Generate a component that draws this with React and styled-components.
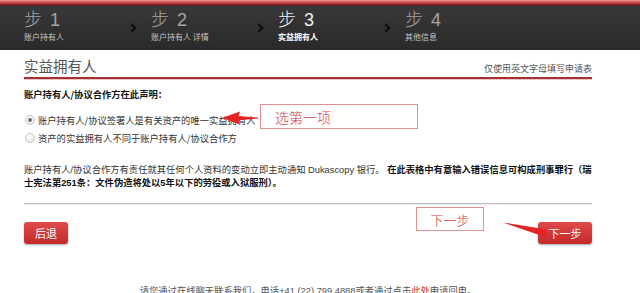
import React from 'react';
import styled, { createGlobalStyle } from 'styled-components';

const Global = createGlobalStyle`
  html, body { margin: 0; padding: 0; background: #fff; }
  body {
    font-family: "Liberation Sans", "Noto Sans CJK SC", sans-serif;
    color: #333;
    width: 640px;
    height: 293px;
    overflow: hidden;
  }
`;

const Page = styled.div`
  position: relative;
  width: 640px;
  height: 293px;
  overflow: hidden;
`;

const Stripe = styled.div`
  height: 6px;
  background: linear-gradient(to bottom, #eaa0a0 0, #d45a5a 2px, #b53434 3.5px, #7a1e1e 5px, #3a2626 6px);
`;

const StepsBar = styled.div`
  height: 44px;
  display: flex;
  align-items: flex-start;
  padding-left: 24px;
  background: linear-gradient(to bottom, #383838, #2a2a2a);
`;

const Step = styled.div`
  width: ${p => (p.$last ? 'auto' : '106px')};
  display: flex;
  flex-direction: column;
  padding-top: 3px;
`;

const StepNum = styled.div`
  font-size: 18px;
  line-height: 22px;
  font-weight: 300;
  color: ${p => (p.$active ? '#f2f2f2' : '#a4a4a4')};
  font-family: "Liberation Sans", "Noto Sans CJK SC", sans-serif;
  span { margin-left: 8px; }
`;

const StepSub = styled.div`
  font-size: 8px;
  line-height: 12px;
  color: ${p => (p.$active ? '#ffffff' : '#c4c4c4')};
  font-weight: ${p => (p.$active ? 700 : 400)};
  font-family: "Noto Sans CJK SC", sans-serif;
`;

const Chevron = styled.div`
  width: 21px;
  padding-top: 17px;
  display: flex;
`;

const Content = styled.div`
  padding: 0 48px 0 24px;
`;

const TitleRow = styled.div`
  display: flex;
  justify-content: space-between;
  align-items: flex-end;
  padding-top: 7px;
  padding-bottom: 2px;
  border-bottom: 2px solid #a83030;
  box-shadow: 0 1px 0 #e8c4c4;
`;

const Title = styled.h1`
  margin: 0;
  font-size: 14.5px;
  line-height: 18px;
  font-weight: 400;
  color: #555;
  font-family: "Noto Sans CJK SC", serif;
`;

const Note = styled.div`
  font-size: 9px;
  line-height: 12px;
  color: #555;
  font-family: "Noto Sans CJK SC", sans-serif;
`;

const Heading = styled.div`
  margin-top: 9px;
  font-size: 9.3px;
  line-height: 12px;
  font-weight: 700;
  color: #111;
  font-family: "Noto Sans CJK SC", sans-serif;
`;

const Options = styled.div`
  margin-top: 11px;
  display: flex;
  flex-direction: column;
`;

const Option = styled.label`
  height: 18px;
  display: flex;
  align-items: center;
  gap: 3px;
  padding-left: 1px;
  font-size: 9.3px;
  color: #333;
  font-family: "Noto Sans CJK SC", sans-serif;
`;

const Radio = styled.span`
  width: 8px;
  height: 8px;
  border-radius: 50%;
  border: 1px solid #c4c4c4;
  background: radial-gradient(circle at 40% 35%, #fff, #e4e4e4);
  display: flex;
  align-items: center;
  justify-content: center;
  &::after {
    content: '';
    width: 4px;
    height: 4px;
    border-radius: 50%;
    background: ${p => (p.$checked ? '#707070' : 'transparent')};
  }
`;

const Para = styled.p`
  margin: 17px 0 0;
  font-size: 9.3px;
  line-height: 13px;
  color: #333;
  font-family: "Liberation Sans", "Noto Sans CJK SC", sans-serif;
  b { color: #111; font-weight: 700; }
`;

const Divider = styled.div`
  margin-top: 13px;
  border-top: 1px solid #bdbdbd;
  border-bottom: 1px solid #ececec;
`;

const ButtonRow = styled.div`
  margin-top: 17px;
  display: flex;
  justify-content: space-between;
`;

const Button = styled.button`
  width: ${p => p.$w}px;
  height: 22px;
  border: none;
  border-radius: 3px;
  background: linear-gradient(to bottom, #e04a4a, #c22a2a);
  box-shadow: 0 1px 2px rgba(0, 0, 0, 0.35);
  color: #fff;
  font-size: 11px;
  font-family: "Noto Sans CJK SC", sans-serif;
  padding: 0;
  display: flex;
  align-items: center;
  justify-content: center;
`;

const Footer = styled.div`
  margin-top: 41px;
  text-align: center;
  font-size: 9.3px;
  line-height: 12px;
  color: #555;
  font-family: "Liberation Sans", "Noto Sans CJK SC", sans-serif;
  a { color: #cc3333; text-decoration: none; }
`;

const AnnoBox = styled.div`
  position: absolute;
  left: ${p => p.$x}px;
  top: ${p => p.$y}px;
  width: ${p => p.$w}px;
  height: ${p => p.$h}px;
  box-sizing: border-box;
  border: 1px solid #e39090;
  background: #fff;
  display: flex;
  align-items: center;
  justify-content: ${p => (p.$center ? 'center' : 'flex-start')};
  padding-left: ${p => (p.$center ? 0 : 14)}px;
  color: #d43c3c;
  font-size: ${p => p.$fs}px;
  font-weight: 300;
  font-family: "Noto Sans CJK SC", sans-serif;
`;

const Overlay = styled.svg`
  position: absolute;
  left: 0;
  top: 0;
  pointer-events: none;
`;

const steps = [
  { n: 1, sub: '账户持有人' },
  { n: 2, sub: '账户持有人 详情' },
  { n: 3, sub: '实益拥有人', active: true },
  { n: 4, sub: '其他信息' },
];

export default function App() {
  return (
    <Page>
      <Global />
      <Stripe />
      <StepsBar>
        {steps.map((s, i) => (
          <React.Fragment key={s.n}>
            <Step $last={i === steps.length - 1}>
              <StepNum $active={s.active}>步<span>{s.n}</span></StepNum>
              <StepSub $active={s.active}>{s.sub}</StepSub>
            </Step>
            {i < steps.length - 1 && (
              <Chevron>
                <svg width="7" height="10" viewBox="0 0 7 10">
                  <polyline points="1.3,1.3 5.3,5 1.3,8.7" fill="none" stroke="#0d0d0d" strokeWidth="2.2" />
                </svg>
              </Chevron>
            )}
          </React.Fragment>
        ))}
      </StepsBar>
      <Content>
        <TitleRow>
          <Title>实益拥有人</Title>
          <Note>仅使用英文字母填写申请表</Note>
        </TitleRow>
        <Heading>账户持有人/协议合作方在此声明：</Heading>
        <Options>
          <Option><Radio $checked />账户持有人/协议签署人是有关资产的唯一实益拥有人</Option>
          <Option><Radio />资产的实益拥有人不同于账户持有人/协议合作方</Option>
        </Options>
        <Para>
          账户持有人/协议合作方有责任就其任何个人资料的变动立即主动通知 Dukascopy 银行。 <b>在此表格中有意输入错误信息可构成刑事罪行（瑞</b>
          <br />
          <b>士宪法第251条：文件伪造将处以5年以下的劳役或入狱服刑）。</b>
        </Para>
        <Divider />
        <ButtonRow>
          <Button $w={44}>后退</Button>
          <Button $w={54}>下一步</Button>
        </ButtonRow>
        <Footer>
          请您通过在线聊天联系我们，电话+41 (22) 799 4888或者通过点击<a href="#">此处</a>申请回电。
        </Footer>
      </Content>

      <AnnoBox $x={260} $y={104} $w={158} $h={25} $fs={14}>选第一项</AnnoBox>
      <AnnoBox $x={416} $y={207} $w={68} $h={24} $fs={13} $center>下一步</AnnoBox>

      <Overlay width="640" height="293" viewBox="0 0 640 293">
        <polygon points="222,118 240,111.5 238.5,116 258,117.6 258,118.6 238.5,120.2 240,124.5" fill="#e42424" />
        <polygon points="503,222.5 547,229.5 545,237" fill="#e42424" />
      </Overlay>
    </Page>
  );
}
